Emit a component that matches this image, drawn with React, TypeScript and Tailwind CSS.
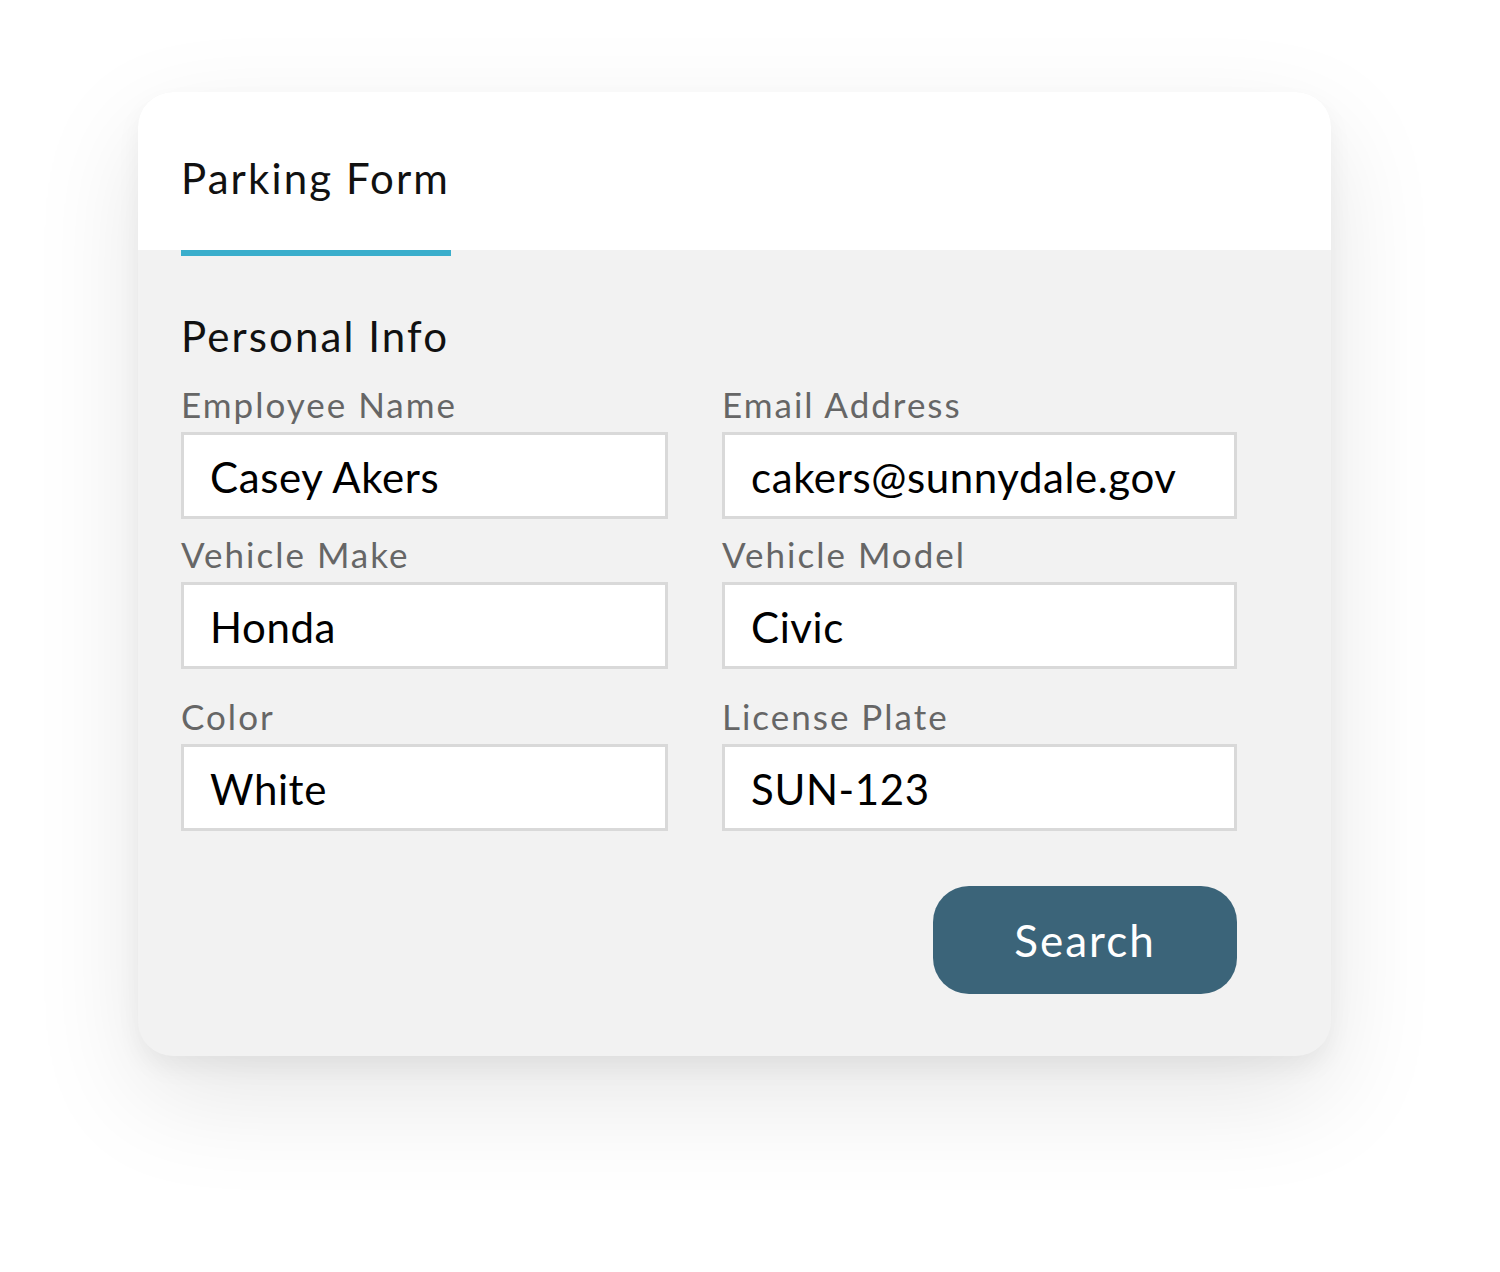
const fields = [
  { label: 'Employee Name', value: 'Casey Akers' },
  { label: 'Email Address', value: 'cakers@sunnydale.gov' },
  { label: 'Vehicle Make', value: 'Honda' },
  { label: 'Vehicle Model', value: 'Civic' },
  { label: 'Color', value: 'White', spaced: true },
  { label: 'License Plate', value: 'SUN-123', spaced: true },
]

function Field({ label, value, spaced }: { label: string; value: string; spaced?: boolean }) {
  return (
    <div className={spaced ? 'mt-[12px]' : ''}>
      <div className="text-[35px] leading-[40px] tracking-[2px] text-[#666666] mb-[8px]">{label}</div>
      <div className="h-[87px] border-[3px] border-[#d9d9d9] bg-white flex items-center pl-[26px] pt-[2px]">
        <span className="text-[42px] leading-[50px] tracking-[0.6px] text-black">{value}</span>
      </div>
    </div>
  )
}

export default function App() {
  return (
    <div
      className="min-h-screen bg-white pt-[92px] pl-[138px]"
      style={{ fontFamily: 'Lato, "Open Sans", sans-serif' }}
    >
      <div className="w-[1193px] rounded-[35px] overflow-hidden bg-[#f2f2f2] shadow-[0_12px_24px_rgba(0,0,0,0.05),0_40px_110px_rgba(0,0,0,0.1)]">
        {/* Header / tab */}
        <div className="h-[158px] bg-white pl-[43px] pt-[61px]">
          <h1 className="text-[42px] leading-[50px] tracking-[2.1px] text-[#111111]">Parking Form</h1>
        </div>
        <div className="ml-[43px] w-[270px] h-[6px] bg-[#3aaecc]" />

        {/* Body */}
        <div className="pl-[43px] pb-[62px] w-[1099px]">
          <h2 className="mt-[55px] text-[42px] leading-[50px] tracking-[2.1px] text-[#111111]">Personal Info</h2>
          <div className="mt-[23px] grid grid-cols-[487px_515px] gap-x-[54px] gap-y-[15px]">
            {fields.map((f) => (
              <Field key={f.label} {...f} />
            ))}
          </div>
          <div className="mt-[55px] flex justify-end">
            <button className="w-[304px] h-[108px] rounded-[36px] bg-[#3b6479] text-white text-[44px] leading-[108px] tracking-[2px]">
              Search
            </button>
          </div>
        </div>
      </div>
    </div>
  )
}
